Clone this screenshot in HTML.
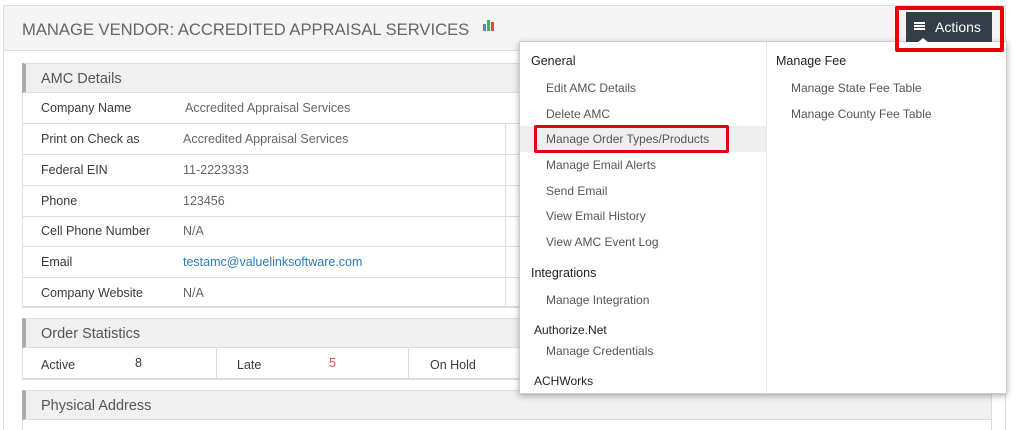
<!DOCTYPE html>
<html><head><style>
html,body{margin:0;width:1024px;height:430px;overflow:hidden;}
body{background:#fff;position:relative;font-family:"Liberation Sans",sans-serif;}
.a{position:absolute;white-space:nowrap;}
.sec{position:absolute;left:22px;width:970px;height:30px;background:#f0f0f0;border:1px solid #ddd;border-left:4px solid #aaa;box-sizing:border-box;}
.sec span{position:absolute;left:15px;top:7px;font-size:14.5px;color:#555;}
.row{position:absolute;left:22px;width:970px;height:31px;border:1px solid #ddd;border-top:none;box-sizing:border-box;font-size:12.5px;}
.row .l{position:absolute;left:18px;top:8px;color:#3a3a3a;}
.row .v{position:absolute;left:160px;top:8px;color:#666;}
.dd{font-size:12px;color:#555;}
.h{font-size:12.5px;color:#222;}
</style></head><body>
<div class="a" style="left:3px;top:5px;width:1003px;height:430px;border:1px solid #ddd;box-sizing:border-box;"></div>
<div class="a" style="left:4px;top:6px;width:1001px;height:44px;background:#f4f4f4;border-bottom:1px solid #ddd;"></div>
<div class="a" style="left:22px;top:20px;font-size:16.6px;color:#666;">MANAGE VENDOR: ACCREDITED APPRAISAL SERVICES</div>
<div class="a" style="left:483px;top:24px;width:3px;height:7px;background:#3a8ee6;"></div>
<div class="a" style="left:487px;top:20px;width:3px;height:11px;background:#4bb050;"></div>
<div class="a" style="left:491px;top:22px;width:3px;height:9px;background:#e64a3a;"></div>

<div class="sec" style="top:63px;"><span>AMC Details</span></div>
<div class="row" style="top:93px;"><span class="l">Company Name</span><span class="v" style="left:162px">Accredited Appraisal Services</span></div>
<div class="row" style="top:124px;"><span class="l">Print on Check as</span><span class="v">Accredited Appraisal Services</span></div>
<div class="row" style="top:155px;"><span class="l">Federal EIN</span><span class="v">11-2223333</span></div>
<div class="row" style="top:186px;"><span class="l">Phone</span><span class="v">123456</span></div>
<div class="row" style="top:216px;"><span class="l">Cell Phone Number</span><span class="v">N/A</span></div>
<div class="row" style="top:247px;"><span class="l">Email</span><span class="v" style="color:#2a7ab8">testamc@valuelinksoftware.com</span></div>
<div class="row" style="top:278px;height:30px;border-bottom:2px solid #ddd;"><span class="l">Company Website</span><span class="v">N/A</span></div>
<div class="a" style="left:505px;top:124px;width:1px;height:184px;background:#ddd;"></div>

<div class="sec" style="top:318px;"><span>Order Statistics</span></div>
<div class="row" style="top:348px;height:32px;border-bottom:2px solid #ddd;"><span class="l" style="top:10px">Active</span><span class="a" style="left:112px;top:8px;color:#333">8</span>
<span class="a" style="left:193px;top:0;width:1px;height:30px;background:#ddd"></span><span class="l" style="left:214px;top:10px">Late</span><span class="a" style="left:306px;top:8px;color:#e64a4a">5</span>
<span class="a" style="left:385px;top:0;width:1px;height:30px;background:#ddd"></span><span class="l" style="left:407px;top:10px">On Hold</span></div>

<div class="sec" style="top:390px;"><span>Physical Address</span></div>
<div class="row" style="top:420px;"></div>

<!-- dropdown -->
<div class="a" style="left:519px;top:41px;width:488px;height:353px;background:#fff;border:1px solid #ccc;box-sizing:border-box;box-shadow:0 2px 6px rgba(0,0,0,.3);"></div>
<div class="a" style="left:766px;top:42px;width:1px;height:351px;background:#e6e6e6;"></div>
<div class="a" style="left:520px;top:126px;width:246px;height:26px;background:#eee;"></div>
<div class="a h" style="left:531px;top:54px;">General</div>
<div class="a dd" style="left:546px;top:81px;">Edit AMC Details</div>
<div class="a dd" style="left:546px;top:107px;">Delete AMC</div>
<div class="a dd" style="left:546px;top:132px;">Manage Order Types/Products</div>
<div class="a dd" style="left:546px;top:158px;">Manage Email Alerts</div>
<div class="a dd" style="left:546px;top:184px;">Send Email</div>
<div class="a dd" style="left:546px;top:209px;">View Email History</div>
<div class="a dd" style="left:546px;top:235px;">View AMC Event Log</div>
<div class="a h" style="left:531px;top:266px;">Integrations</div>
<div class="a dd" style="left:546px;top:293px;">Manage Integration</div>
<div class="a h" style="left:534px;top:323px;font-size:12px;">Authorize.Net</div>
<div class="a dd" style="left:546px;top:344px;">Manage Credentials</div>
<div class="a h" style="left:534px;top:374px;font-size:12px;">ACHWorks</div>
<div class="a h" style="left:776px;top:54px;">Manage Fee</div>
<div class="a dd" style="left:791px;top:81px;">Manage State Fee Table</div>
<div class="a dd" style="left:791px;top:107px;">Manage County Fee Table</div>
<div class="a" style="left:534px;top:125px;width:195px;height:28px;border:3px solid #e8000b;border-radius:2px;box-sizing:border-box;"></div>

<!-- actions -->
<div class="a" style="left:906px;top:12px;width:86px;height:30px;background:#333e48;"></div>
<div class="a" style="left:914px;top:22px;width:11px;height:2px;background:#fff;box-shadow:0 3px 0 #fff,0 6px 0 #fff;"></div>
<div class="a" style="left:935px;top:19px;color:#fff;font-size:14px;">Actions</div>
<div class="a" style="left:917px;top:38px;width:0;height:0;border-left:6px solid transparent;border-right:6px solid transparent;border-bottom:5px solid #fff;"></div>
<div class="a" style="left:895px;top:6px;width:109px;height:46px;border:4px solid #e8000b;border-radius:2px;box-sizing:border-box;"></div>
</body></html>
